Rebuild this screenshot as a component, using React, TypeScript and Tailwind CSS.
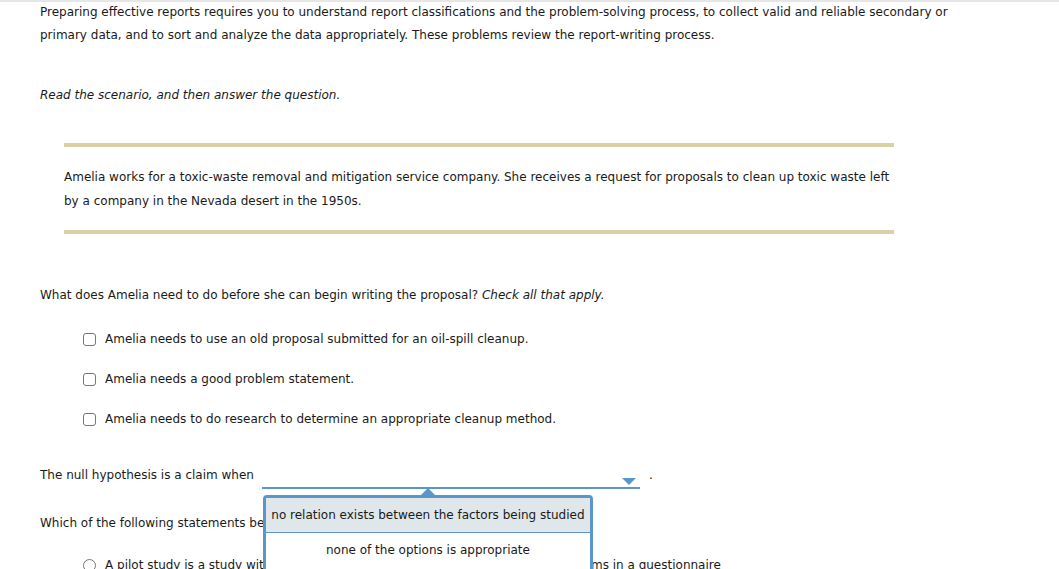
import React from "react";

const font = { fontFamily: '"DejaVu Sans", Verdana, sans-serif' };

function Checkbox() {
  return <span className="inline-block w-[13px] h-[13px] border border-[#767676] rounded-[3px] bg-white shrink-0" />;
}

export default function App() {
  return (
    <div className="w-[1059px] h-[569px] overflow-hidden bg-white text-[#1a1a1a] border-t-2 border-[#e6e6e6] relative" style={font}>
      <div className="pl-[40px] pr-[100px] text-[12px] leading-[24px]">
        <p className="-mt-[1px] leading-[23px]">
          Preparing effective reports requires you to understand report classifications and the problem-solving process, to collect valid and reliable secondary or primary data, and to sort and analyze the data appropriately. These problems review the report-writing process.
        </p>
        <p className="mt-[36px] italic">Read the scenario, and then answer the question.</p>
        <div className="ml-[24px] w-[830px] mt-[36px]">
          <div className="h-[4px] bg-[#dbd0a4]" />
          <p className="mt-[18px]">
            Amelia works for a toxic-waste removal and mitigation service company. She receives a request for proposals to clean up toxic waste left by a company in the Nevada desert in the 1950s.
          </p>
          <div className="h-[4px] bg-[#dbd0a4] mt-[17px]" />
        </div>
        <p className="mt-[49px]">
          What does Amelia need to do before she can begin writing the proposal? <span className="italic">Check all that apply.</span>
        </p>
        <div className="ml-[43px] mt-[20px] flex flex-col gap-[16px]">
          {[
            "Amelia needs to use an old proposal submitted for an oil-spill cleanup.",
            "Amelia needs a good problem statement.",
            "Amelia needs to do research to determine an appropriate cleanup method.",
          ].map((t) => (
            <div key={t} className="flex items-center gap-[9px] h-[24px]">
              <Checkbox />
              <span>{t}</span>
            </div>
          ))}
        </div>
        <div className="mt-[32px] flex items-end h-[24px]">
          <span>The null hypothesis is a claim when</span>
          <div className="relative ml-[8px] w-[378px] h-[20px] border-b-2 border-[#5a96c8] mb-[-2px]">
            <svg className="absolute right-[4px] top-[9px]" width="14" height="7" viewBox="0 0 14 7">
              <path d="M0 0 H14 L7 7 Z" fill="#5a96c8" />
            </svg>
            <div className="absolute left-[1px] top-[20px] w-[330px] z-10">
              <svg className="absolute left-[157px] top-[-1px]" width="16" height="8" viewBox="0 0 16 8">
                <path d="M0 8 L8 0 L16 8 Z" fill="#5a96c8" />
              </svg>
              <div className="mt-[6px] border-[3px] border-[#5a96c8] rounded-[4px] bg-white">
                <div className="bg-[#dfe7eb] h-[35px] flex items-center justify-center border-b border-[#5a96c8]">
                  no relation exists between the factors being studied
                </div>
                <div className="h-[34px] flex items-center justify-center">none of the options is appropriate</div>
                <div className="h-[20px]" />
              </div>
            </div>
          </div>
          <span className="ml-[9px]">.</span>
        </div>
        <p className="mt-[24px] whitespace-nowrap">Which of the following statements best describes a pilot study?</p>
        <div className="ml-[43px] mt-[18px] flex items-center gap-[9px] h-[24px] whitespace-nowrap">
          <span className="inline-block w-[13px] h-[13px] rounded-full border border-[#767676] shrink-0" />
          <span>A pilot study is a study with a small group of people that is used to detect problems in a questionnaire</span>
        </div>
      </div>
    </div>
  );
}
